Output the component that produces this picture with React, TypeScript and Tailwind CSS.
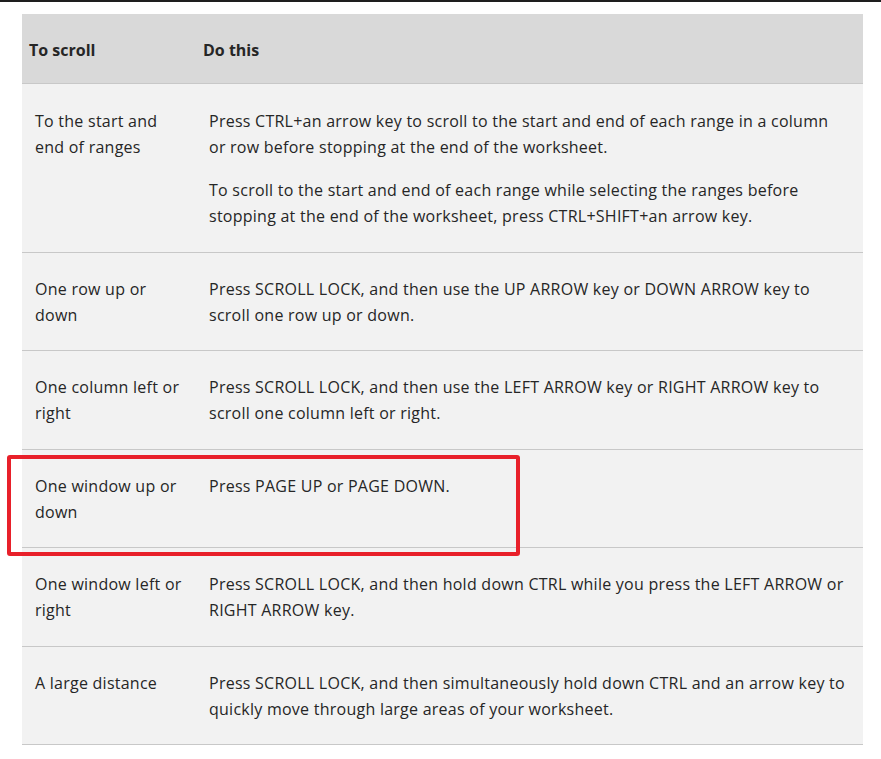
import React from 'react';

type Row = {
  scroll: string;
  doThis: string[];
};

const rows: Row[] = [
  {
    scroll: 'To the start and end of ranges',
    doThis: [
      'Press CTRL+an arrow key to scroll to the start and end of each range in a column or row before stopping at the end of the worksheet.',
      'To scroll to the start and end of each range while selecting the ranges before stopping at the end of the worksheet, press CTRL+SHIFT+an arrow key.',
    ],
  },
  {
    scroll: 'One row up or down',
    doThis: ['Press SCROLL LOCK, and then use the UP ARROW key or DOWN ARROW key to scroll one row up or down.'],
  },
  {
    scroll: 'One column left or right',
    doThis: ['Press SCROLL LOCK, and then use the LEFT ARROW key or RIGHT ARROW key to scroll one column left or right.'],
  },
  {
    scroll: 'One window up or down',
    doThis: ['Press PAGE UP or PAGE DOWN.'],
  },
  {
    scroll: 'One window left or right',
    doThis: ['Press SCROLL LOCK, and then hold down CTRL while you press the LEFT ARROW or RIGHT ARROW key.'],
  },
  {
    scroll: 'A large distance',
    doThis: ['Press SCROLL LOCK, and then simultaneously hold down CTRL and an arrow key to quickly move through large areas of your worksheet.'],
  },
];

// row heights in the screenshot alternate by a pixel
function rowPadding(i: number) {
  if (i === 0) return 'pt-[24px] pb-[23px]';
  if (i % 2 === 0) return 'pt-[23px] pb-[23px]';
  return 'pt-[23px] pb-[22px]';
}

export default function App() {
  return (
    <div
      className="min-h-screen bg-white border-t-2 border-[#1e1e1e] text-[#262626] text-[16px] leading-[26px]"
      style={{ fontFamily: '"Open Sans", "Noto Sans", Arial, sans-serif' }}
    >
      <div className="relative ml-[22px] mr-[18px] mt-[12px]">
        <div className="grid grid-cols-[174px_1fr] bg-[#d9d9d9] border-b border-[#c8c8c8] h-[70px] pt-[3px] items-center font-bold">
          <div className="pl-[7px]">To scroll</div>
          <div className="pl-[7px]">Do this</div>
        </div>

        {rows.map((row, i) => (
          <div
            key={row.scroll}
            className={`grid grid-cols-[174px_1fr] bg-[#f2f2f2] border-b border-[#c8c8c8] tracking-[0.25px] ${rowPadding(i)}`}
          >
            <div className="pl-[13px] pr-[10px]">{row.scroll}</div>
            <div className="pl-[13px] pr-[17px] space-y-[17px]">
              {row.doThis.map((p) => (
                <p key={p}>{p}</p>
              ))}
            </div>
          </div>
        ))}

        {/* highlight round the PAGE UP row */}
        <div className="absolute left-[-15px] top-[441px] w-[513px] h-[101px] border-[4px] border-[#e8202a] rounded-[3px]" />
      </div>
    </div>
  );
}
